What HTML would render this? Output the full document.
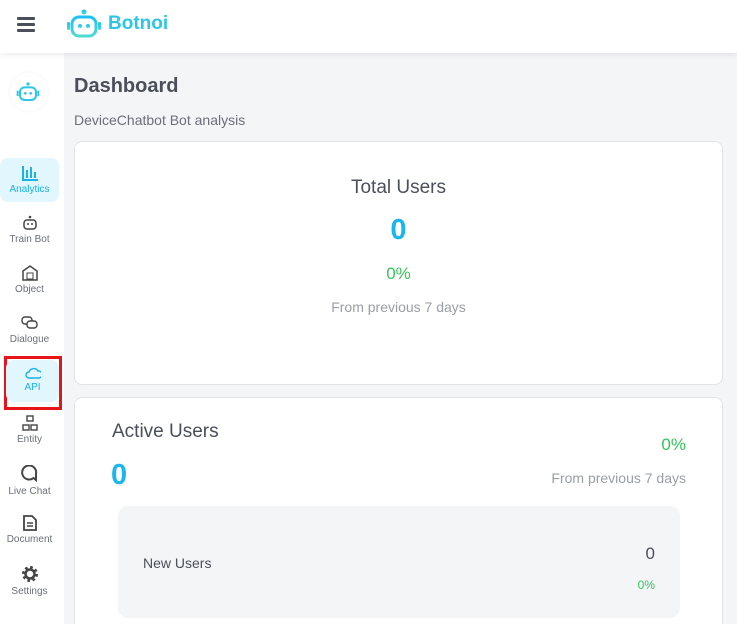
<!DOCTYPE html>
<html><head><style>
*{box-sizing:border-box;margin:0;padding:0}
html,body{width:737px;height:624px;overflow:hidden}
body{background:#f4f5f7;font-family:"Liberation Sans",sans-serif;position:relative}
.hdr{position:absolute;left:0;top:0;width:737px;height:53px;background:#fff;box-shadow:0 2px 6px rgba(0,0,0,.08);z-index:2}
.side{position:absolute;left:0;top:53px;width:64px;height:571px;background:#fff}
.item{position:absolute;left:0;width:59px;height:44px;text-align:center;font-size:10px;color:#6b6f78}
.item svg{display:block;margin:7px auto 3px}
.card{position:absolute;background:#fff;border:1px solid #e2e4e8;border-radius:8px}
</style></head><body>
<div class="hdr">
 <div style="position:absolute;left:17px;top:17px;width:18px;height:2.5px;background:#4a4f5a;box-shadow:0 6px 0 #4a4f5a,0 12px 0 #4a4f5a;border-radius:1px"></div>
 <svg style="position:absolute;left:66px;top:9px" width="36" height="30" viewBox="0 0 36 30"><defs><linearGradient id="g" x1="0" y1="0" x2="0" y2="1"><stop offset="0" stop-color="#1ec0f5"/><stop offset="1" stop-color="#4bdbd0"/></linearGradient></defs><circle cx="18" cy="3" r="2.5" fill="url(#g)"/><rect x="6" y="8" width="24" height="19" rx="7" fill="none" stroke="url(#g)" stroke-width="3"/><rect x="1" y="13" width="3" height="8" rx="1.5" fill="url(#g)"/><rect x="32" y="13" width="3" height="8" rx="1.5" fill="url(#g)"/><circle cx="14" cy="17" r="2" fill="url(#g)"/><circle cx="22" cy="17" r="2" fill="url(#g)"/></svg>
 <div style="position:absolute;left:108px;top:13px;font-size:19px;font-weight:bold;color:#2cc6e8">Botnoi</div>
</div>
<div class="side">
 <div style="position:absolute;left:10px;top:20px;width:38px;height:38px;border-radius:50%;box-shadow:0 0 4px rgba(0,0,0,.05)"></div>
 <svg style="position:absolute;left:16px;top:29px" width="24" height="20" viewBox="0 0 36 30"><circle cx="18" cy="3" r="2.5" fill="#2cc6e8"/><rect x="6" y="8" width="24" height="19" rx="7" fill="none" stroke="#2cc6e8" stroke-width="3"/><rect x="1" y="13" width="3" height="8" fill="#2cc6e8"/><rect x="32" y="13" width="3" height="8" fill="#2cc6e8"/><circle cx="14" cy="17" r="2" fill="#2cc6e8"/><circle cx="22" cy="17" r="2" fill="#2cc6e8"/></svg>
</div>
<div class="item" style="top:158px;background:#e1f6fd;border-radius:8px;color:#1ab2e8"><svg width="18" height="16"><path d="M2 1v14h15" stroke="#1ab2e8" stroke-width="2" fill="none"/><rect x="5" y="5" width="2" height="8" fill="#1ab2e8"/><rect x="9" y="2" width="2" height="11" fill="#1ab2e8"/><rect x="13" y="7" width="2" height="6" fill="#1ab2e8"/></svg>Analytics</div>
<div class="item" style="top:208px"><svg width="16" height="16"><rect x="2" y="5" width="12" height="9" rx="3" fill="none" stroke="#444" stroke-width="1.5"/><circle cx="8" cy="2" r="1.3" fill="#444"/><circle cx="6" cy="9" r="1" fill="#444"/><circle cx="10" cy="9" r="1" fill="#444"/></svg>Train Bot</div>
<div class="item" style="top:258px"><svg width="16" height="16"><path d="M1 15V6l7-5 7 5v9z" fill="none" stroke="#444" stroke-width="1.5"/><rect x="5" y="8" width="6" height="6" fill="none" stroke="#444"/></svg>Object</div>
<div class="item" style="top:308px"><svg width="17" height="16"><rect x="1" y="2" width="10" height="7" rx="3" fill="none" stroke="#444" stroke-width="1.4"/><rect x="6" y="6" width="10" height="7" rx="3" fill="#fff" stroke="#444" stroke-width="1.4"/></svg>Dialogue</div>
<div style="position:absolute;left:4px;top:356px;width:58px;height:54px;border:3px solid #e8141c"></div>
<div class="item" style="top:360px;left:6px;width:53px;height:42px;background:#e1f6fd;border-radius:8px;color:#1ab2e8"><svg width="16" height="12"><path d="M4 11a3 3 0 010-6 5 5 0 019-1 3 3 0 011 7z" fill="none" stroke="#1ab2e8" stroke-width="1.4"/></svg>API</div>
<div class="item" style="top:408px"><svg width="16" height="16"><rect x="5" y="1" width="6" height="5" fill="none" stroke="#444" stroke-width="1.4"/><rect x="1" y="10" width="6" height="5" fill="none" stroke="#444" stroke-width="1.4"/><rect x="9" y="10" width="6" height="5" fill="none" stroke="#444" stroke-width="1.4"/></svg>Entity</div>
<div class="item" style="top:458px"><svg width="18" height="18"><path d="M15 15l-2.5-2A7 7 0 1 1 15 9z" fill="none" stroke="#444" stroke-width="2"/></svg>Live Chat</div>
<div class="item" style="top:508px"><svg width="14" height="16"><path d="M1 1h8l4 4v10H1z" fill="none" stroke="#444" stroke-width="1.8"/><path d="M4 8h6M4 11h6" stroke="#444" stroke-width="1.5"/></svg>Document</div>
<div class="item" style="top:558px"><svg width="18" height="18"><circle cx="9" cy="9" r="6" fill="none" stroke="#444" stroke-width="4" stroke-dasharray="2.4 2.3"/><circle cx="9" cy="9" r="4.5" fill="none" stroke="#444" stroke-width="2.5"/></svg>Settings</div>

<div style="position:absolute;left:74px;top:75px;font-size:20px;font-weight:bold;color:#4a4f5a">Dashboard</div>
<div style="position:absolute;left:74px;top:112px;font-size:14px;color:#6b6f78">DeviceChatbot Bot analysis</div>
<div class="card" style="left:74px;top:141px;width:649px;height:244px;text-align:center">
 <div style="position:absolute;left:0;right:0;top:35px;font-size:19px;color:#4a4f5a">Total Users</div>
 <div style="position:absolute;left:0;right:0;top:72px;font-size:29px;font-weight:bold;color:#1ab6f0">0</div>
 <div style="position:absolute;left:0;right:0;top:122px;font-size:17px;color:#35c45a">0%</div>
 <div style="position:absolute;left:0;right:0;top:157px;font-size:14px;color:#9a9ea6">From previous 7 days</div>
</div>
<div class="card" style="left:74px;top:397px;width:649px;height:240px">
 <div style="position:absolute;left:37px;top:23px;font-size:19px;color:#4a4f5a">Active Users</div>
 <div style="position:absolute;right:36px;top:37px;font-size:17px;color:#35c45a">0%</div>
 <div style="position:absolute;left:36px;top:61px;font-size:29px;font-weight:bold;color:#1ab6f0">0</div>
 <div style="position:absolute;right:36px;top:72px;font-size:14px;color:#9a9ea6">From previous 7 days</div>
 <div style="position:absolute;left:43px;top:108px;width:562px;height:112px;background:#f4f5f7;border-radius:10px">
  <div style="position:absolute;left:25px;top:49px;font-size:14px;color:#4a4f5a">New Users</div>
  <div style="position:absolute;right:25px;top:38px;font-size:17px;color:#4a4f5a">0</div>
  <div style="position:absolute;right:25px;top:72px;font-size:12px;color:#35c45a">0%</div>
 </div>
</div>
</body></html>
